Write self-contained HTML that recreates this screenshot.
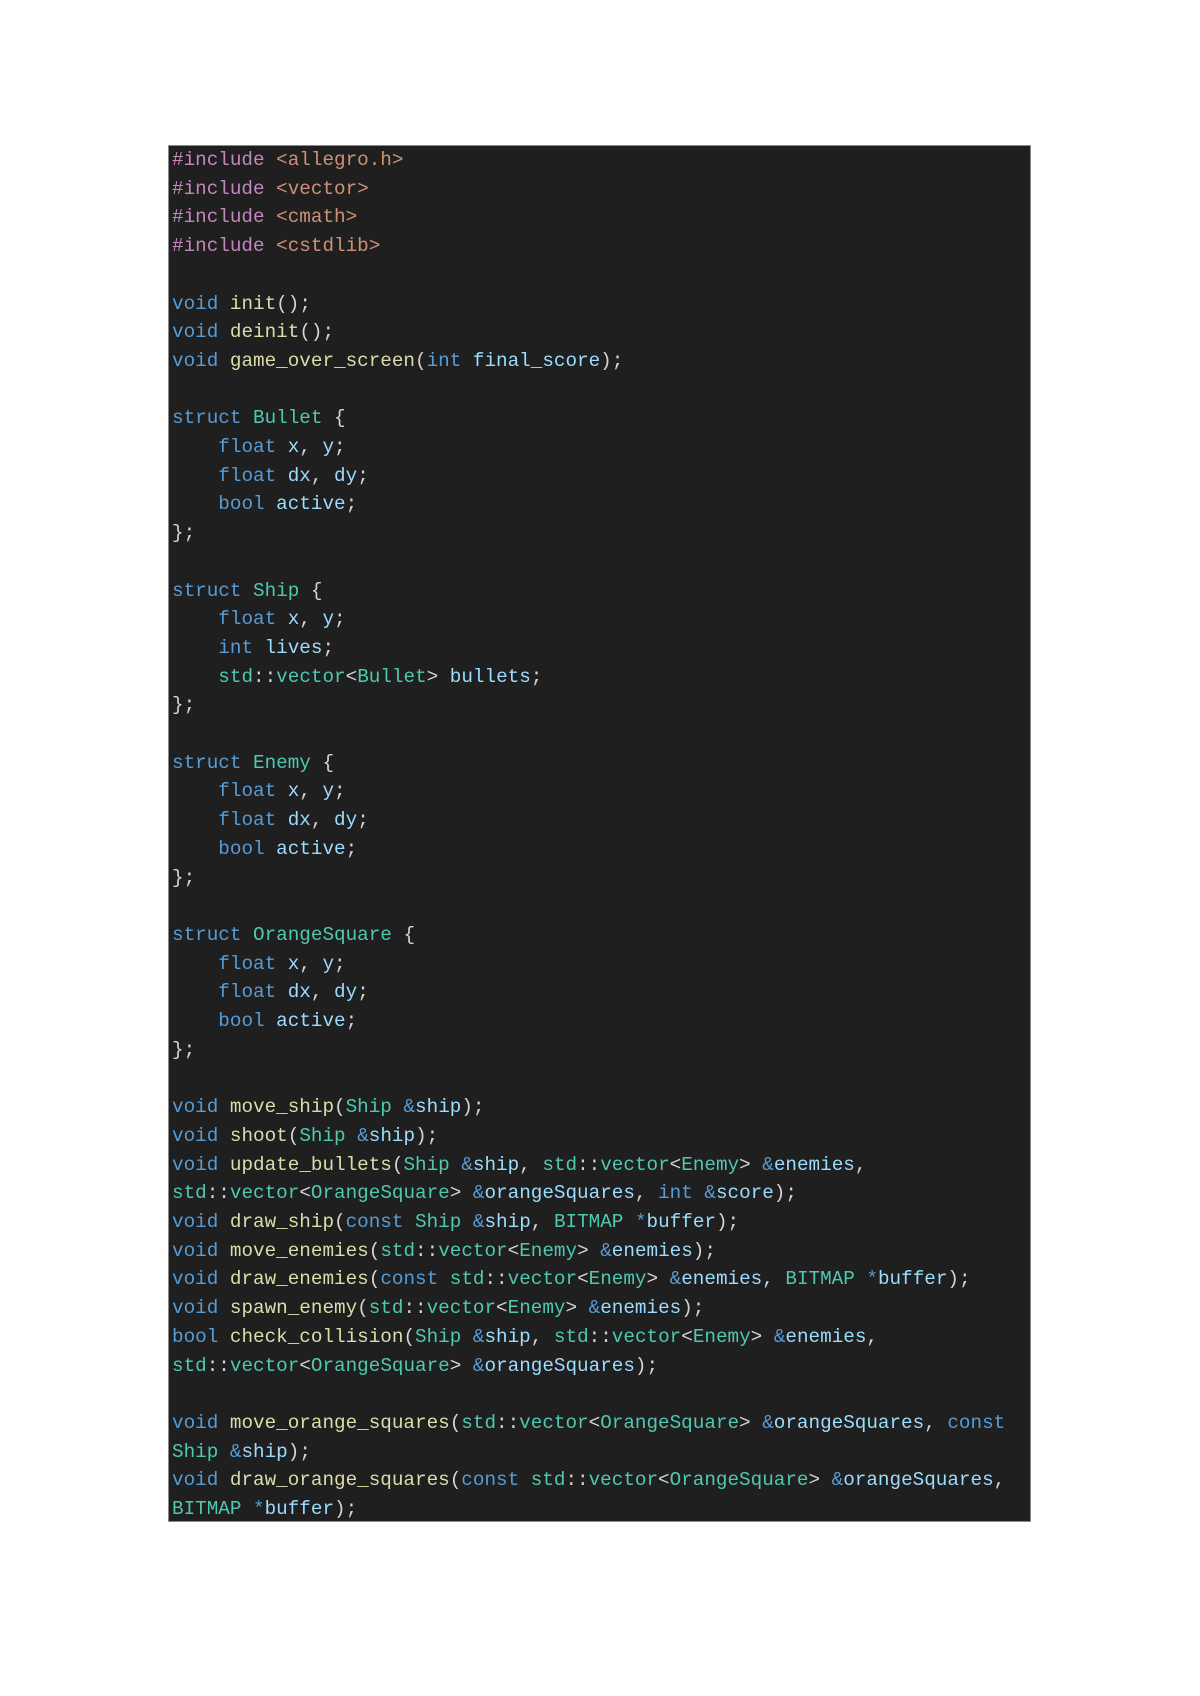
<!DOCTYPE html>
<html><head><meta charset="utf-8"><style>
html,body{margin:0;padding:0;background:#fff;width:1200px;height:1696px;overflow:hidden}
#box{position:absolute;left:168px;top:145px;width:863px;height:1377px;background:#1f1f1f;border:1px solid #8a8a8a;box-sizing:border-box}
pre{margin:0;padding:0 0 0 3px;font-family:"Liberation Mono",monospace;font-size:19.3px;line-height:28.7px;color:#d4d4d4;white-space:pre}
.k{color:#569cd6}.p{color:#c586c0}.s{color:#ce9178}.f{color:#dcdcaa}.v{color:#9cdcfe}.t{color:#4ec9b0}
</style></head><body><div id="box"><pre><span class="p">#include</span> <span class="s">&lt;allegro.h&gt;</span>
<span class="p">#include</span> <span class="s">&lt;vector&gt;</span>
<span class="p">#include</span> <span class="s">&lt;cmath&gt;</span>
<span class="p">#include</span> <span class="s">&lt;cstdlib&gt;</span>

<span class="k">void</span> <span class="f">init</span>();
<span class="k">void</span> <span class="f">deinit</span>();
<span class="k">void</span> <span class="f">game_over_screen</span>(<span class="k">int</span> <span class="v">final_score</span>);

<span class="k">struct</span> <span class="t">Bullet</span> {
    <span class="k">float</span> <span class="v">x</span>, <span class="v">y</span>;
    <span class="k">float</span> <span class="v">dx</span>, <span class="v">dy</span>;
    <span class="k">bool</span> <span class="v">active</span>;
};

<span class="k">struct</span> <span class="t">Ship</span> {
    <span class="k">float</span> <span class="v">x</span>, <span class="v">y</span>;
    <span class="k">int</span> <span class="v">lives</span>;
    <span class="t">std</span>::<span class="t">vector</span>&lt;<span class="t">Bullet</span>&gt; <span class="v">bullets</span>;
};

<span class="k">struct</span> <span class="t">Enemy</span> {
    <span class="k">float</span> <span class="v">x</span>, <span class="v">y</span>;
    <span class="k">float</span> <span class="v">dx</span>, <span class="v">dy</span>;
    <span class="k">bool</span> <span class="v">active</span>;
};

<span class="k">struct</span> <span class="t">OrangeSquare</span> {
    <span class="k">float</span> <span class="v">x</span>, <span class="v">y</span>;
    <span class="k">float</span> <span class="v">dx</span>, <span class="v">dy</span>;
    <span class="k">bool</span> <span class="v">active</span>;
};

<span class="k">void</span> <span class="f">move_ship</span>(<span class="t">Ship</span> <span class="k">&amp;</span><span class="v">ship</span>);
<span class="k">void</span> <span class="f">shoot</span>(<span class="t">Ship</span> <span class="k">&amp;</span><span class="v">ship</span>);
<span class="k">void</span> <span class="f">update_bullets</span>(<span class="t">Ship</span> <span class="k">&amp;</span><span class="v">ship</span>, <span class="t">std</span>::<span class="t">vector</span>&lt;<span class="t">Enemy</span>&gt; <span class="k">&amp;</span><span class="v">enemies</span>,
<span class="t">std</span>::<span class="t">vector</span>&lt;<span class="t">OrangeSquare</span>&gt; <span class="k">&amp;</span><span class="v">orangeSquares</span>, <span class="k">int</span> <span class="k">&amp;</span><span class="v">score</span>);
<span class="k">void</span> <span class="f">draw_ship</span>(<span class="k">const</span> <span class="t">Ship</span> <span class="k">&amp;</span><span class="v">ship</span>, <span class="t">BITMAP</span> <span class="k">*</span><span class="v">buffer</span>);
<span class="k">void</span> <span class="f">move_enemies</span>(<span class="t">std</span>::<span class="t">vector</span>&lt;<span class="t">Enemy</span>&gt; <span class="k">&amp;</span><span class="v">enemies</span>);
<span class="k">void</span> <span class="f">draw_enemies</span>(<span class="k">const</span> <span class="t">std</span>::<span class="t">vector</span>&lt;<span class="t">Enemy</span>&gt; <span class="k">&amp;</span><span class="v">enemies</span>, <span class="t">BITMAP</span> <span class="k">*</span><span class="v">buffer</span>);
<span class="k">void</span> <span class="f">spawn_enemy</span>(<span class="t">std</span>::<span class="t">vector</span>&lt;<span class="t">Enemy</span>&gt; <span class="k">&amp;</span><span class="v">enemies</span>);
<span class="k">bool</span> <span class="f">check_collision</span>(<span class="t">Ship</span> <span class="k">&amp;</span><span class="v">ship</span>, <span class="t">std</span>::<span class="t">vector</span>&lt;<span class="t">Enemy</span>&gt; <span class="k">&amp;</span><span class="v">enemies</span>,
<span class="t">std</span>::<span class="t">vector</span>&lt;<span class="t">OrangeSquare</span>&gt; <span class="k">&amp;</span><span class="v">orangeSquares</span>);

<span class="k">void</span> <span class="f">move_orange_squares</span>(<span class="t">std</span>::<span class="t">vector</span>&lt;<span class="t">OrangeSquare</span>&gt; <span class="k">&amp;</span><span class="v">orangeSquares</span>, <span class="k">const</span>
<span class="t">Ship</span> <span class="k">&amp;</span><span class="v">ship</span>);
<span class="k">void</span> <span class="f">draw_orange_squares</span>(<span class="k">const</span> <span class="t">std</span>::<span class="t">vector</span>&lt;<span class="t">OrangeSquare</span>&gt; <span class="k">&amp;</span><span class="v">orangeSquares</span>,
<span class="t">BITMAP</span> <span class="k">*</span><span class="v">buffer</span>);</pre></div></body></html>
